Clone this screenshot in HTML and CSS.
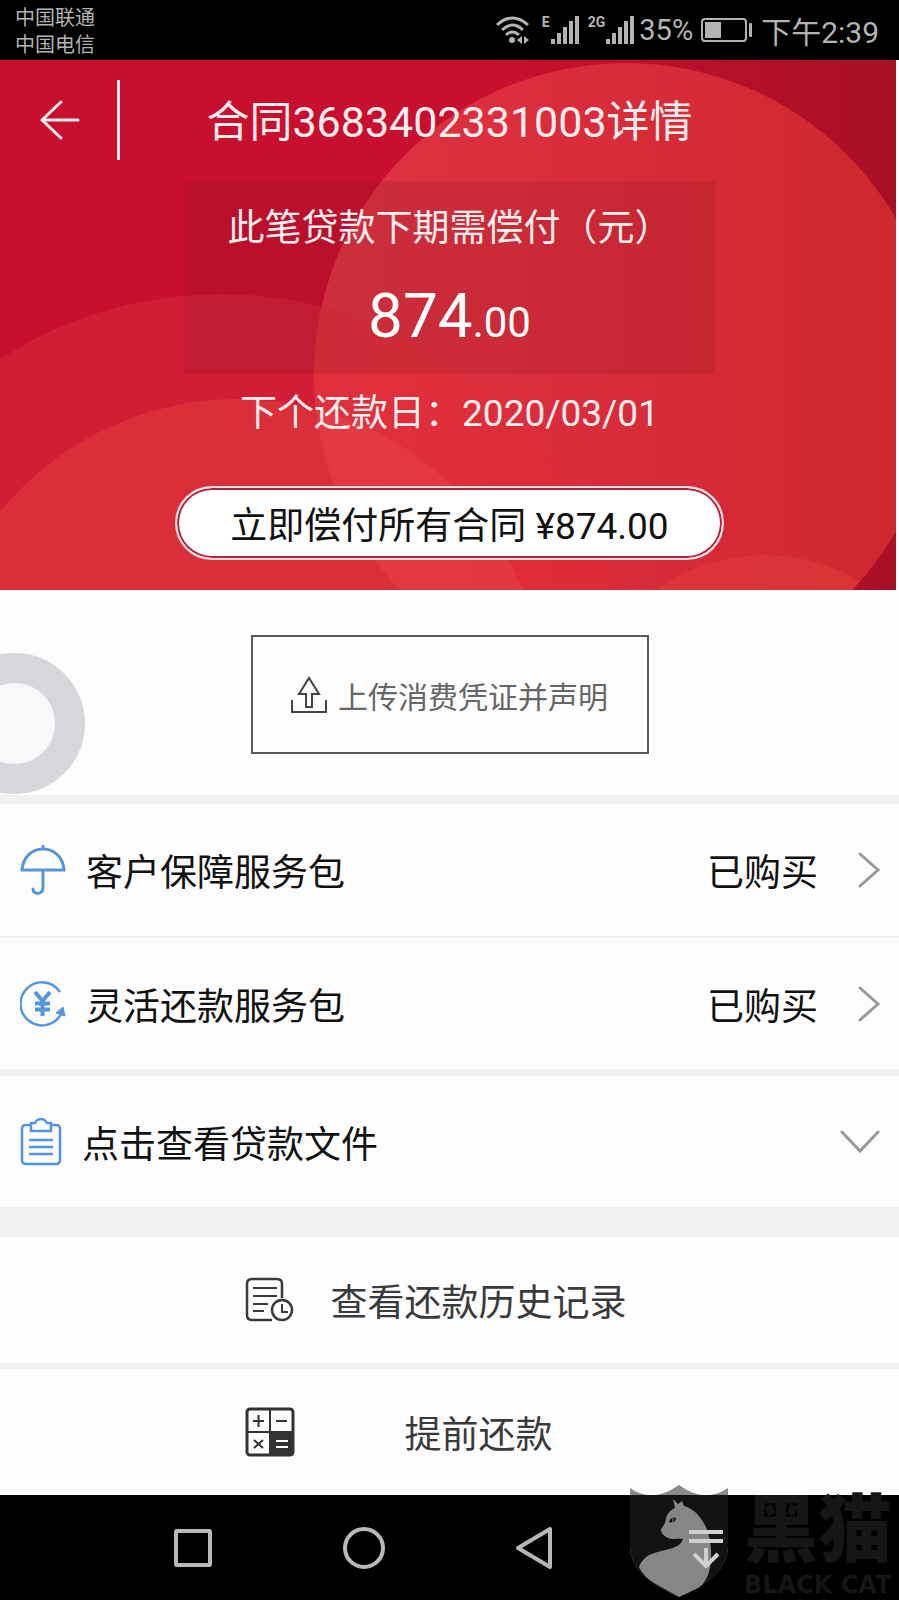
FILE: index.html
```
<!DOCTYPE html>
<html lang="zh-CN">
  <head>
    <meta charset="UTF-8" />
    <meta name="viewport" content="width=device-width, initial-scale=1.0" />
    <title>合同详情</title>
    <link rel="stylesheet" href="styles.css">
  </head>
  <body>
    <div class="status-bar">
      <div class="carriers">
        <span>中国联通</span>
        <span>中国电信</span>
      </div>
      <div class="status-icons">
        <svg class="wifi" width="34" height="28" viewBox="0 0 34 28">
          <g fill="none" stroke="#b4b2b4" stroke-width="3">
            <path d="M1 9 Q16.500 -5 32 9" />
            <path d="M6 14 Q16.500 4 27 14" />
            <path d="M10 19 Q16.500 13 23 19" />
          </g>
          <circle cx="16" cy="24" r="3" fill="#b4b2b4" />
          <path d="M21 24l5-4v8zM33 24l-5-4v8z" fill="#b4b2b4" />
        </svg>
        <span class="net">E</span>
        <svg class="signal" width="30" height="28" viewBox="0 0 30 28">
          <path d="M1 23h4v5h-4zM7 17h4v11h-4zM13 11h4v17h-4zM19 5h4v23h-4zM25 0h4v28h-4z" fill="#b4b2b4" />
        </svg>
        <span class="net net-2g">2G</span>
        <svg class="signal" width="30" height="28" viewBox="0 0 30 28">
          <path d="M1 23h4v5h-4zM7 17h4v11h-4zM13 11h4v17h-4zM19 5h4v23h-4zM25 0h4v28h-4z" fill="#b4b2b4" />
        </svg>
        <span class="percent">35%</span>
        <svg class="battery" width="52" height="24" viewBox="0 0 52 24">
          <rect x="1" y="1" width="44" height="22" rx="3" fill="none" stroke="#b4b2b4" stroke-width="2" />
          <rect x="4" y="4" width="16" height="16" fill="#b4b2b4" />
          <rect x="48" y="5" width="3" height="14" rx="1" fill="#b4b2b4" />
        </svg>
        <span class="time">下午2:39</span>
      </div>
    </div>

    <div class="hero">
      <svg class="hero-bg" viewBox="0 0 896 530" preserveAspectRatio="none">
        <defs>
          <linearGradient id="base" x1="0" x2="1" y1="0" y2="0">
            <stop offset="0" stop-color="#c8102e" />
            <stop offset="0.55" stop-color="#c8102e" />
            <stop offset="1" stop-color="#a81026" />
          </linearGradient>
          <linearGradient id="big" x1="0" x2="1" y1="0" y2="0">
            <stop offset="0" stop-color="#de3442" />
            <stop offset="0.4" stop-color="#db2c3b" />
            <stop offset="1" stop-color="#cd282d" />
          </linearGradient>
          <clipPath id="bigClip">
            <circle cx="626" cy="315" r="312" />
          </clipPath>
        </defs>
        <rect width="896" height="530" fill="url(#base)" />
        <circle cx="221" cy="642" r="408" fill="#d11e35" />
        <circle cx="238" cy="647" r="308" fill="#da2e38" />
        <circle cx="626" cy="315" r="312" fill="url(#big)" />
        <g clip-path="url(#bigClip)">
          <circle cx="221" cy="642" r="408" fill="#e22c34" opacity="0.4" />
          <circle cx="238" cy="647" r="308" fill="#e6454c" opacity="0.45" />
          <circle cx="765" cy="680" r="185" fill="#e03a3a" opacity="0.6" />
        </g>
      </svg>
      <div class="header">
        <button class="back" aria-label="返回">
          <svg width="40" height="40" viewBox="0 0 40 40" fill="none" stroke="#ffeef0" stroke-width="3" stroke-linecap="round" stroke-linejoin="round">
            <path d="M38 20H2M21 2L2 20l19 18" />
          </svg>
        </button>
        <h1>合同3683402331003详情</h1>
      </div>
      <div class="amount-card">
        <p class="label">此笔贷款下期需偿付（元）</p>
        <p class="amount">874<span>.00</span></p>
      </div>
      <p class="due">下个还款日：2020/03/01</p>
      <button class="pay">立即偿付所有合同 ¥874.00</button>
    </div>

    <div class="upload-area">
      <button class="upload">
        <svg width="36" height="38" viewBox="0 0 36 38" fill="none" stroke="#444" stroke-width="2">
          <path d="M1 24v12h34v-12M15 31V18h-7L18 2l10 16h-7v13z" />
        </svg>
        上传消费凭证并声明
      </button>
      <div class="float-ball"></div>
    </div>

    <div class="list">
      <a class="row" href="#">
        <svg width="46" height="50" viewBox="0 0 46 50" fill="none" stroke="#5595dc" stroke-width="3" stroke-linecap="round">
          <path d="M2 25C3 12 12 4 23 4s20 8 21 21zM23 1v3M23 25v18c0 7-10 7-10 1" />
        </svg>
        <span class="name">客户保障服务包</span>
        <span class="state">已购买</span>
        <svg class="arrow" width="22" height="36" viewBox="0 0 22 36"><path d="M2 2l18 16L2 34" /></svg>
      </a>
      <a class="row row-second" href="#">
        <svg width="46" height="48" viewBox="0 0 46 48" fill="none" stroke="#5595dc" stroke-width="2.500">
          <path d="M40 12A21.500 21.500 0 1 0 41 34" />
          <path d="M36 33l7-6 2 9z" fill="#5595dc" stroke-width="1" />
          <path d="M15 12l7.500 9 7.500-9M22.500 21v15M15 23.500h15M15 29.500h15" stroke-width="4" />
        </svg>
        <span class="name">灵活还款服务包</span>
        <span class="state">已购买</span>
        <svg class="arrow" width="22" height="36" viewBox="0 0 22 36"><path d="M2 2l18 16L2 34" /></svg>
      </a>
      <a class="row row-docs" href="#">
        <svg width="42" height="48" viewBox="0 0 42 48" fill="none" stroke="#5595dc" stroke-width="2.500">
          <path d="M11 7H6q-4 0-4 4v31q0 4 4 4h30q4 0 4-4V11q0-4-4-4h-5" />
          <path d="M11 5h4q2-4 6-4t6 4h4v8H11z" />
          <path d="M10 22h22M10 29h22M10 36h22" stroke-linecap="round" />
        </svg>
        <span class="name">点击查看贷款文件</span>
        <svg class="arrow" width="40" height="24" viewBox="0 0 40 24"><path d="M2 2l18 19L38 2" /></svg>
      </a>
    </div>

    <div class="actions">
      <a class="action" href="#">
        <svg width="50" height="46" viewBox="0 0 50 46" fill="none" stroke="#3a3a3c" stroke-width="2.500">
          <path d="M27 43H7q-5 0-5-5V7q0-5 5-5h25q5 0 5 5v14" />
          <path d="M8 11h24M8 19h24M8 27h15M8 34h11" stroke-width="2" />
          <circle cx="37" cy="33" r="10" />
          <path d="M37 27v8h6" stroke-width="2" />
        </svg>
        <span>查看还款历史记录</span>
      </a>
      <a class="action" href="#">
        <svg width="50" height="50" viewBox="0 0 50 50" fill="none" stroke="#333335" stroke-width="2">
          <rect x="2" y="2" width="46" height="46" rx="3" stroke-width="3" />
          <path d="M25 2v46M2 25h46" />
          <path d="M25 25h23v20q0 3-3 3h-20z" fill="#333335" />
          <path d="M8 14h11M13.500 8v12M31 14h11M9 33l9 8M18 33l-9 8" />
          <path d="M31 34h12M31 40h12" stroke="#fff" />
        </svg>
        <span>提前还款</span>
      </a>
    </div>

    <div class="nav-bar">
      <!-- watermark -->
      <div class="watermark">
        <svg width="98" height="114" viewBox="0 0 98 114">
          <path d="M0 3Q22 19 49 0Q75 19 98 3V62Q98 91 49 112Q0 91 0 62Z" fill="#8b8a8b" />
          <path d="M0 10H98V62Q98 91 49 112Q0 91 0 62Z" fill="#131113" />
          <path d="M43 14l5 5 4-3 2 5C70 25 81 46 81 66C82 86 76 100 66 104L49 112 24 98Q13 91 9 82C17 60 48 70 53 54C47 53 43 55 38 53C33 50 31 48 31 44Q36 38 36 33Q38 26 45 23z" fill="#868686" />
          <path d="M39 37q2-6 7-4q-1 6-7 4z" fill="#151315" />
          <path d="M43 33v5" stroke="#868686" />
        </svg>
        <div class="brand">
          <span class="brand-cn">黑猫</span>
          <span class="brand-en">BLACK CAT</span>
        </div>
      </div>
      <button aria-label="最近任务">
        <svg width="44" height="44" viewBox="0 0 44 44"><rect x="5" y="5" width="34" height="34" rx="1" /></svg>
      </button>
      <button aria-label="主页">
        <svg width="44" height="44" viewBox="0 0 44 44"><circle cx="22" cy="22" r="19" /></svg>
      </button>
      <button aria-label="返回上一页">
        <svg width="44" height="44" viewBox="0 0 44 44"><path d="M5 22L37 3v38z" /></svg>
      </button>
      <button aria-label="下拉通知">
        <svg class="pull" width="44" height="44" viewBox="0 0 44 44"><path d="M5 6h34M5 15h34M22 22v18M10 28l12 12 12-12" /></svg>
      </button>
    </div>
  </body>
</html>
```
FILE: styles.css
```
* {
  margin: 0px;
  padding: 0px;
  box-sizing: border-box;
}
body {
  font-family: Roboto, "Noto Sans CJK SC", sans-serif;
  font-size: 37px;
  font-weight: 400;
  background-color: #fdfdfd;
  overflow-x: hidden;
}
button {
  font: inherit;
  border: none;
  background: none;
  cursor: pointer;
}
a {
  text-decoration: none;
  color: inherit;
}
svg {
  display: block;
  flex-shrink: 0;
}

/* status bar */
.status-bar {
  display: flex;
  justify-content: space-between;
  height: 60px;
  padding: 0px 20px 0px 15px;
  background-color: #000;
  color: #b4b2b4;
}
.carriers {
  display: flex;
  flex-direction: column;
  padding-top: 5px;
  font-size: 20px;
  line-height: 27px;
}
.status-icons {
  display: flex;
  align-items: center;
  font-size: 30px;
}
.net {
  align-self: flex-start;
  margin: 14px 0px 0px 12px;
  font-size: 14px;
  font-weight: 700;
  line-height: 16px;
}
.net-2g {
  margin-left: 8px;
}
.percent {
  margin: 0px 8px 0px 4px;
  font-size: 29px;
}
.time {
  margin-left: 8px;
}

/* red area */
.hero {
  position: relative;
  display: flex;
  flex-direction: column;
  align-items: center;
  height: 530px;
  padding-top: 20px;
  color: #ffeef0;
}
.hero-bg {
  position: absolute;
  top: 0px;
  left: 0px;
  z-index: -1;
  width: calc(100% - 3px);
  height: 100%;
}
.header {
  display: grid;
  grid-template-columns: 120px 1fr 120px;
  align-items: center;
  width: 100%;
}
.back {
  height: 80px;
  padding-left: 40px;
  border-right: 3px solid #ffe4e8;
}
h1 {
  padding-top: 4px;
  font-size: 43px;
  font-weight: 400;
  line-height: 76px;
  text-align: center;
  white-space: nowrap;
}
.amount-card {
  width: 59%;
  height: 193px;
  margin-top: 21px;
  padding-top: 22px;
  background-color: rgba(110, 20, 30, 0.15);
  text-align: center;
  white-space: nowrap;
}
.label {
  line-height: 52px;
}
.amount {
  margin-top: 21px;
  font-size: 62px;
  line-height: 80px;
  color: #fff;
}
.amount span {
  font-size: 42px;
}
.due {
  margin-top: 14px;
  line-height: 52px;
}
.pay {
  width: 61%;
  height: 74px;
  margin-top: 46px;
  border: 2px solid #ffdfe2;
  border-radius: 37px;
  background-color: #fff;
  box-shadow: inset 0px 0px 0px 2px #b3223d;
  color: #111;
  white-space: nowrap;
}

/* upload */
.upload-area {
  position: relative;
  display: flex;
  justify-content: center;
  padding: 45px 0px 41px;
}
.upload {
  display: flex;
  align-items: center;
  justify-content: center;
  gap: 11px;
  width: 398px;
  height: 119px;
  border: 2px solid #5a5a5a;
  font-size: 30px;
  color: #666;
}
.float-ball {
  position: absolute;
  top: 63px;
  left: -56px;
  width: 141px;
  height: 141px;
  border: 30px solid #d8d6da;
  border-radius: 50%;
  background-color: #f9f7fa;
}

/* list */
.list {
  border-top: 9px solid #f1f1f2;
  border-bottom: 30px solid #f1f0f2;
  color: #111;
}
.row {
  display: flex;
  align-items: center;
  height: 132px;
  padding: 0px 19px 0px 20px;
}
.row-second {
  height: 133px;
  border-top: 2px solid #f1f1f2;
}
.row-docs {
  height: 138px;
  border-top: 7px solid #f0f0f1;
}
.name {
  flex: 1;
  margin-left: 20px;
}
.state {
  margin-right: 40px;
}
.arrow {
  fill: none;
  stroke: #999;
  stroke-width: 3;
  stroke-linecap: round;
}

/* actions */
.action {
  display: flex;
  align-items: center;
  justify-content: center;
  gap: 34px;
  height: 126px;
  padding-right: 26px;
  color: #3a3a3c;
}
.action + .action {
  height: 132px;
  border-top: 6px solid #f1f0f2;
}
.action span {
  width: 300px;
  text-align: center;
}

/* nav */
.nav-bar {
  position: relative;
  display: grid;
  grid-template-columns: repeat(4, 1fr);
  align-items: center;
  height: 105px;
  padding: 0px 12%;
  background-color: #000;
}
.nav-bar button {
  position: relative;
  display: flex;
  justify-content: center;
}
.nav-bar button svg {
  fill: none;
  stroke: #b8b8b8;
  stroke-width: 4;
  stroke-linejoin: round;
}
.nav-bar button .pull {
  stroke: #d0d0d0;
}
.watermark {
  position: absolute;
  right: 3px;
  bottom: 1px;
  display: flex;
  align-items: flex-end;
  gap: 16px;
  color: #171517;
}
.brand {
  display: flex;
  flex-direction: column;
  width: 152px;
}
.brand-cn {
  font-size: 74px;
  font-weight: 900;
  line-height: 80px;
}
.brand-en {
  font-family: "DejaVu Sans", sans-serif;
  font-size: 24px;
  font-weight: 700;
  line-height: 28px;
  white-space: nowrap;
}
```
